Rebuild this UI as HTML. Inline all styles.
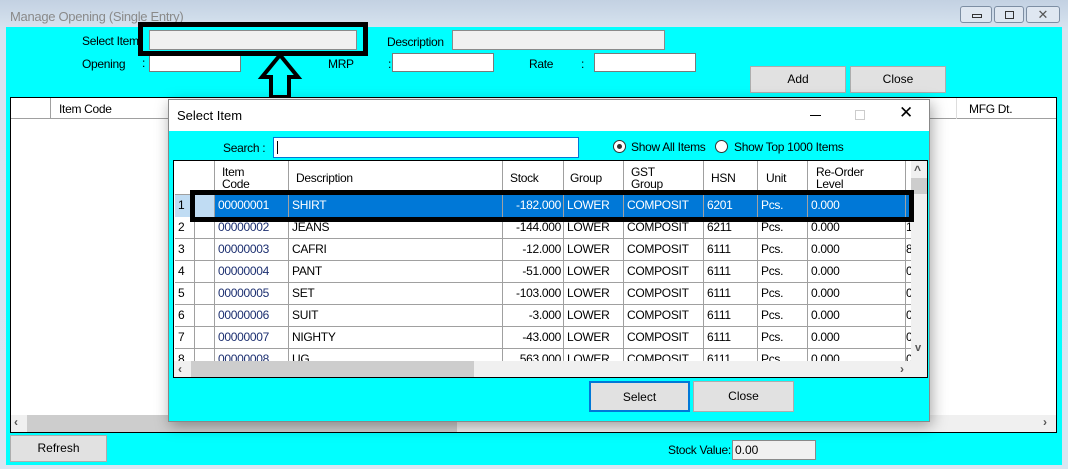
<!DOCTYPE html>
<html><head><meta charset="utf-8"><style>
*{margin:0;padding:0;box-sizing:border-box}
body{width:1068px;height:469px;overflow:hidden;position:relative;background:linear-gradient(#c3d1e2,#d8e4f0 30px,#dae6f2);font-family:"Liberation Sans",sans-serif;font-size:12px;color:#000}
.a{position:absolute}
.cy{background:#00ffff}
.tb{background:#fff;border:1px solid #7a7a7a}
.tbg{background:#f0f0f0;border:1px solid #8a8a8a}
.btn{background:#e1e1e1;border:1px solid #adadad;text-align:center}
.l{white-space:nowrap;letter-spacing:-0.3px}
.row{position:absolute;left:1px;height:22px;width:737px;border-bottom:1px solid #a0a0a0}
.row div{position:absolute;top:0;height:22px;line-height:21px;border-right:1px solid #a0a0a0;padding-left:3px;white-space:nowrap;overflow:hidden;letter-spacing:-0.3px}
</style></head><body>
<div class="a l" style="left:10px;top:9px;color:#8a8a8a;font-size:13px">Manage Opening (Single Entry)</div>
<div class="a" style="left:960px;top:6px;width:32px;height:17px;border:1px solid #7d8ea3;border-radius:3px;background:#dfe7f1"><div class="a" style="left:11px;top:7px;width:10px;height:4px;border:1px solid #333"></div></div>
<div class="a" style="left:994px;top:6px;width:30px;height:17px;border:1px solid #7d8ea3;border-radius:3px;background:#dfe7f1"><div class="a" style="left:10px;top:4px;width:9px;height:8px;border:1px solid #333"></div></div>
<div class="a" style="left:1026px;top:6px;width:34px;height:17px;border:1px solid #7d8ea3;border-radius:3px;background:#dfe7f1;text-align:center;line-height:15px;color:#555;font-size:13px">✕</div>
<div class="a cy" style="left:6px;top:27px;width:1056px;height:438px"></div>
<div class="a l" style="left:82px;top:34px">Select Item</div>
<div class="a tbg" style="left:149px;top:30px;width:208px;height:20px"></div>
<div class="a l" style="left:387px;top:35px">Description</div>
<div class="a tbg" style="left:452px;top:30px;width:213px;height:20px"></div>
<div class="a l" style="left:82px;top:57px">Opening</div><div class="a" style="left:142px;top:56px">:</div>
<div class="a tb" style="left:149px;top:53px;width:92px;height:19px"></div>
<div class="a l" style="left:328px;top:57px">MRP</div><div class="a" style="left:388px;top:57px">:</div>
<div class="a tb" style="left:392px;top:53px;width:102px;height:19px"></div>
<div class="a l" style="left:529px;top:57px">Rate</div><div class="a" style="left:581px;top:57px">:</div>
<div class="a tb" style="left:594px;top:53px;width:102px;height:19px"></div>
<div class="a btn" style="left:750px;top:66px;width:96px;height:27px;line-height:25px">Add</div>
<div class="a btn" style="left:850px;top:66px;width:96px;height:27px;line-height:25px">Close</div>
<div class="a" style="left:138px;top:22px;width:230px;height:34px;border:5px solid #000"></div>
<svg class="a" style="left:255px;top:52px" width="50" height="50"><path d="M25 3 L43 25 L34 25 L34 45 L16 45 L16 25 L7 25 Z" fill="none" stroke="#000" stroke-width="4" stroke-linejoin="miter"/></svg>
<div class="a" style="left:10px;top:97px;width:1047px;height:336px;background:#fff;border:1px solid #000">
 <div class="a" style="left:0;top:0;width:1045px;height:21px;border-bottom:1px solid #a0a0a0"></div>
 <div class="a" style="left:39px;top:0;width:1px;height:21px;background:#a0a0a0"></div>
 <div class="a l" style="left:48px;top:4px">Item Code</div>
 <div class="a" style="left:945px;top:0;width:1px;height:21px;background:#ddd"></div>
 <div class="a l" style="left:958px;top:4px">MFG Dt.</div>
 <div class="a" style="left:0;top:317px;width:1045px;height:17px;background:#f0f0f0"><div class="a" style="left:16px;top:0;width:430px;height:17px;background:#cdcdcd"></div><div class="a" style="left:3px;top:0;color:#555;font-weight:bold">‹</div><div class="a" style="left:1032px;top:0;color:#555;font-weight:bold">›</div></div>
</div>
<div class="a btn" style="left:10px;top:435px;width:97px;height:27px;line-height:25px">Refresh</div>
<div class="a l" style="left:668px;top:443px">Stock Value:</div>
<div class="a tbg" style="left:732px;top:440px;width:84px;height:20px;padding-left:2px;line-height:18px">0.00</div>
<div class="a" style="left:168px;top:99px;width:762px;height:323px;border:1px solid #888;box-shadow:2px 4px 14px rgba(0,0,0,.35);background:#00ffff">
 <div class="a" style="left:0;top:0;width:760px;height:31px;background:#fff"></div>
 <div class="a" style="left:8px;top:8px;font-size:13px">Select Item</div>
 <div class="a" style="left:641px;top:15px;width:11px;height:1px;background:#000"></div>
 <div class="a" style="left:686px;top:10px;width:10px;height:10px;border:1px solid #ccc"></div>
 <div class="a" style="left:730px;top:3px;font-size:17px">✕</div>
 <div class="a l" style="left:54px;top:41px">Search :</div>
 <div class="a" style="left:104px;top:37px;width:306px;height:21px;background:#fff;border:1px solid #0078d7"><div class="a" style="left:3px;top:3px;width:1px;height:13px;background:#000"></div></div>
 <div class="a" style="left:444px;top:40px;width:13px;height:13px;border:1px solid #333;border-radius:50%;background:#fff"><div class="a" style="left:3px;top:3px;width:5px;height:5px;border-radius:50%;background:#333"></div></div>
 <div class="a l" style="left:462px;top:40px">Show All Items</div>
 <div class="a" style="left:546px;top:40px;width:13px;height:13px;border:1px solid #333;border-radius:50%;background:#fff"></div>
 <div class="a l" style="left:565px;top:40px">Show Top 1000 Items</div>
 <div class="a" style="left:4px;top:60px;width:755px;height:218px;background:#fff;border:1px solid #000;overflow:hidden">
  <div class="row" style="top:0;height:34px;border-bottom:1px solid #a0a0a0">
   <div style="left:0;width:40px;height:34px"></div>
   <div style="left:40px;width:74px;height:34px;line-height:12px;padding-top:5px;padding-left:7px">Item<br>Code</div>
   <div style="left:114px;width:214px;height:34px;line-height:34px;padding-left:7px">Description</div>
   <div style="left:328px;width:61px;height:34px;line-height:34px;padding-left:7px">Stock</div>
   <div style="left:389px;width:60px;height:34px;line-height:34px;padding-left:6px">Group</div>
   <div style="left:449px;width:80px;height:34px;line-height:12px;padding-top:5px;padding-left:7px">GST<br>Group</div>
   <div style="left:529px;width:54px;height:34px;line-height:34px;padding-left:7px">HSN</div>
   <div style="left:583px;width:50px;height:34px;line-height:34px;padding-left:8px">Unit</div>
   <div style="left:633px;width:98px;height:34px;line-height:12px;padding-top:5px;padding-left:8px">Re-Order<br>Level</div>
  </div>
  <div id="rows"></div>
  <div class="a" style="left:737px;top:0;width:17px;height:200px;background:#f0f0f0"><div class="a" style="left:3px;top:2px;color:#555;font-size:12px;font-weight:bold">^</div><div class="a" style="left:0;top:17px;width:17px;height:16px;background:#cdcdcd"></div><div class="a" style="left:4px;top:181px;color:#555;font-size:11px;font-weight:bold">v</div></div>
  <div class="a" style="left:0;top:200px;width:754px;height:17px;background:#f0f0f0"><div class="a" style="left:17px;top:0;width:283px;height:17px;background:#cdcdcd"></div><div class="a" style="left:4px;top:1px;color:#555;font-weight:bold">‹</div><div class="a" style="left:726px;top:1px;color:#555;font-weight:bold">›</div></div>
 </div>
 <div class="a btn" style="left:420px;top:281px;width:101px;height:31px;line-height:29px;border:2px solid #0078d7">Select</div>
 <div class="a btn" style="left:524px;top:281px;width:101px;height:31px;line-height:29px">Close</div>
</div>
<div class="a" style="left:190px;top:190px;width:724px;height:32px;border:5px solid #000"></div>
<script>
var d=[["00000001","SHIRT","-182.000","6201","0"],["00000002","JEANS","-144.000","6211","1"],["00000003","CAFRI","-12.000","6111","8"],["00000004","PANT","-51.000","6111","0"],["00000005","SET","-103.000","6111","0"],["00000006","SUIT","-3.000","6111","0"],["00000007","NIGHTY","-43.000","6111","0"],["00000008","UG","563.000","6111","0"]];
var h="";d.forEach(function(r,i){var s=i==0;var bg=s?"background:#0078d7;color:#fff;":"";var cc=s?"":"color:#1c2f70;";
h+='<div class="row" style="top:'+(34+i*22)+'px">'+
'<div style="left:0;width:20px;'+(s?'background:#c0dcf3;':'')+'">'+(i+1)+'</div>'+
'<div style="left:20px;width:20px;'+(s?'background:#c0dcf3;':'')+'"></div>'+
'<div style="left:40px;width:74px;'+bg+cc+'">'+r[0]+'</div>'+
'<div style="left:114px;width:214px;'+bg+'">'+r[1]+'</div>'+
'<div style="left:328px;width:61px;text-align:right;padding-right:2px;'+bg+'">'+r[2]+'</div>'+
'<div style="left:389px;width:60px;'+bg+'">LOWER</div>'+
'<div style="left:449px;width:80px;'+bg+'">COMPOSIT</div>'+
'<div style="left:529px;width:54px;'+bg+'">'+r[3]+'</div>'+
'<div style="left:583px;width:50px;'+bg+'">Pcs.</div>'+
'<div style="left:633px;width:98px;'+bg+'">0.000</div>'+
'<div style="left:731px;width:6px;border-right:none;padding-left:0;'+bg+'">'+(s?'':r[4])+'</div></div>';});
document.getElementById("rows").innerHTML=h;
</script>
</body></html>
